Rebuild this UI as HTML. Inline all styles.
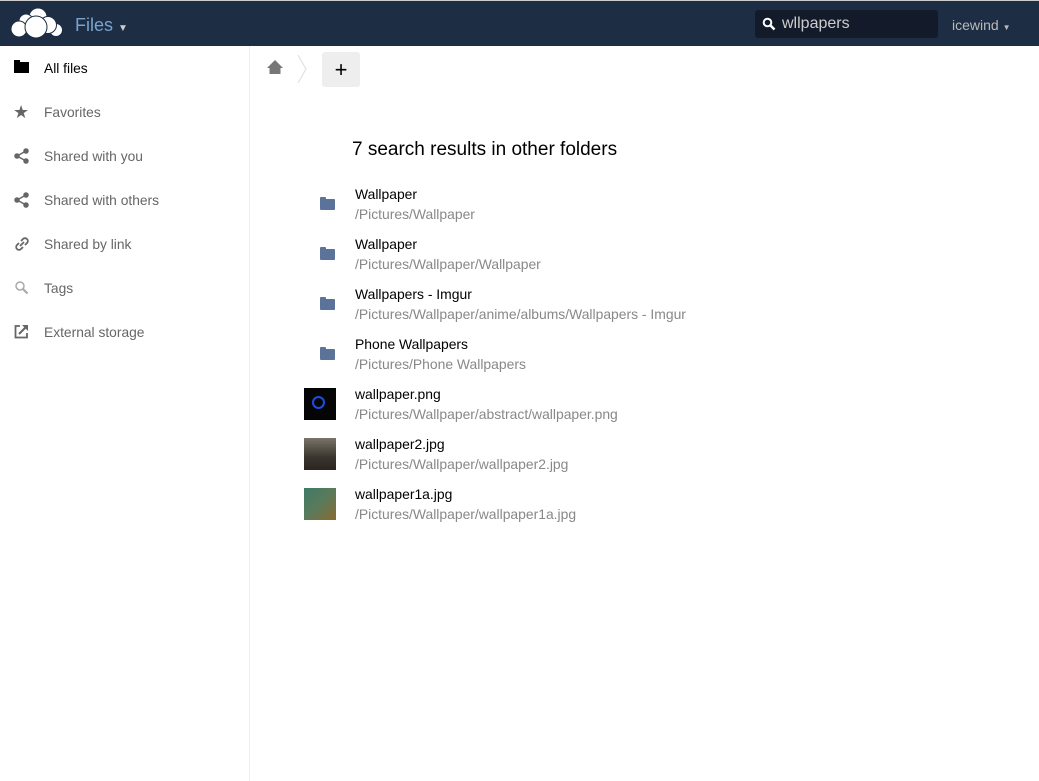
<!DOCTYPE html>
<html><head><style>
body{margin:0;width:1039px;height:781px;overflow:hidden;font-family:"Liberation Sans",sans-serif;background:#fff;position:relative}
.hdr{position:absolute;top:0;left:0;width:1039px;height:46px;background:#1d2d44;border-top:1px solid #ccc;box-sizing:border-box}
.nav{position:absolute;top:46px;left:0;width:249px;height:735px;border-right:1px solid #eee}
.ni{position:absolute;left:44px;font-size:13.8px;color:#666}
.ic{position:absolute;left:14px}
.r{position:absolute;left:355px;font-size:13.9px}
.r .n{color:#000}
.r .p{color:#888;margin-top:4px}
.fold{position:absolute;left:320px;width:15px;height:11px;background:#5b7399;border-radius:1px}
.fold:before{content:"";position:absolute;left:0;top:-2px;width:6px;height:3px;background:#5b7399;border-radius:1px 1px 0 0}
.th{position:absolute;left:304px;width:32px;height:32px}
</style></head><body>
<div class="hdr">
<svg style="position:absolute;left:10px;top:6px" width="54" height="32" viewBox="0 0 54 32"><g fill="#fff" stroke="#1d2d44" stroke-width="1"><circle cx="28" cy="10" r="9"/><circle cx="16" cy="14" r="7"/><circle cx="9" cy="22" r="8"/><circle cx="46" cy="23" r="6.5"/><circle cx="38" cy="18" r="8.5"/><circle cx="26" cy="20" r="11"/></g></svg>
<div style="position:absolute;left:75px;top:14px;font-size:18px;color:#7aa2cf">Files <span style="font-size:10px;color:#ccc">▼</span></div>
<div style="position:absolute;left:755px;top:9px;width:183px;height:28px;background:#131b2b;border-radius:3px"></div>
<svg style="position:absolute;left:762px;top:16px" width="14" height="14" viewBox="0 0 14 14"><circle cx="5.5" cy="5.5" r="3.8" fill="none" stroke="#fff" stroke-width="2"/><path d="M8 8l4.5 4.5" stroke="#fff" stroke-width="2.5"/></svg>
<div style="position:absolute;left:782px;top:14px;font-size:16px;color:#ccc">wllpapers</div>
<div style="position:absolute;left:952px;top:16px;font-size:14px;color:#bbb">icewind <span style="font-size:8px">▼</span></div>
</div>
<div class="nav">
<div class="ic" style="top:16px;width:15px;height:11px;background:#000"></div><div class="ic" style="top:14px;width:6px;height:3px;background:#000"></div>
<div class="ni" style="top:15px;color:#000">All files</div>
<div class="ic" style="top:56px;color:#666;font-size:18px;left:13px">★</div><div class="ni" style="top:59px">Favorites</div>
<svg class="ic" style="top:102px" width="15" height="16"><g fill="#666" stroke="#666" stroke-width="1.5"><circle cx="3" cy="8" r="2"/><circle cx="12" cy="3" r="2"/><circle cx="12" cy="13" r="2"/><path d="M3 8L12 3M3 8L12 13" fill="none"/></g></svg><div class="ni" style="top:103px">Shared with you</div>
<svg class="ic" style="top:146px" width="15" height="16"><g fill="#666" stroke="#666" stroke-width="1.5"><circle cx="3" cy="8" r="2"/><circle cx="12" cy="3" r="2"/><circle cx="12" cy="13" r="2"/><path d="M3 8L12 3M3 8L12 13" fill="none"/></g></svg><div class="ni" style="top:147px">Shared with others</div>
<svg class="ic" style="top:190px" width="16" height="16"><g fill="none" stroke="#666" stroke-width="1.8"><path d="M7 5l2-2a2.5 2.5 0 0 1 4 4l-2 2"/><path d="M9 11l-2 2a2.5 2.5 0 0 1-4-4l2-2"/><path d="M6 10l4-4"/></g></svg><div class="ni" style="top:191px">Shared by link</div>
<svg class="ic" style="top:234px" width="15" height="15"><circle cx="6" cy="6" r="4" fill="none" stroke="#aaa" stroke-width="1.5"/><path d="M9 9l4.5 4.5" stroke="#aaa" stroke-width="2.2"/></svg><div class="ni" style="top:235px">Tags</div>
<svg class="ic" style="top:278px" width="15" height="15"><path d="M6 2H1.5v11.5H13V9" fill="none" stroke="#666" stroke-width="1.8"/><path d="M8 1h6v6z" fill="#666"/><path d="M5 10l7-7" stroke="#666" stroke-width="2"/></svg><div class="ni" style="top:279px">External storage</div>
</div>
<svg style="position:absolute;left:267px;top:60px" width="16" height="14"><path d="M8 0L0 8h2.5v6h11V8H16z" fill="#777"/></svg>
<svg style="position:absolute;left:296px;top:55px" width="12" height="28"><path d="M2 0l8 14-8 14" fill="none" stroke="#ddd"/></svg>
<div style="position:absolute;left:322px;top:52px;width:38px;height:35px;background:#eee;border-radius:3px;text-align:center;font-size:22px;line-height:35px;color:#000">+</div>
<div style="position:absolute;left:352px;top:139px;font-size:19px;color:#000">7 search results in other folders</div>
<div class="fold" style="top:199px"></div><div class="r" style="top:186px"><div class="n">Wallpaper</div><div class="p">/Pictures/Wallpaper</div></div>
<div class="fold" style="top:249px"></div><div class="r" style="top:236px"><div class="n">Wallpaper</div><div class="p">/Pictures/Wallpaper/Wallpaper</div></div>
<div class="fold" style="top:299px"></div><div class="r" style="top:286px"><div class="n">Wallpapers - Imgur</div><div class="p">/Pictures/Wallpaper/anime/albums/Wallpapers - Imgur</div></div>
<div class="fold" style="top:349px"></div><div class="r" style="top:336px"><div class="n">Phone Wallpapers</div><div class="p">/Pictures/Phone Wallpapers</div></div>
<div class="th" style="top:388px;background:#050505"><div style="position:absolute;left:8px;top:8px;width:9px;height:9px;border:2px solid #1a4ee0;border-radius:50%"></div></div><div class="r" style="top:386px"><div class="n">wallpaper.png</div><div class="p">/Pictures/Wallpaper/abstract/wallpaper.png</div></div>
<div class="th" style="top:438px;background:linear-gradient(#7a7468,#3a352e 60%,#2a2520)"></div><div class="r" style="top:436px"><div class="n">wallpaper2.jpg</div><div class="p">/Pictures/Wallpaper/wallpaper2.jpg</div></div>
<div class="th" style="top:488px;background:linear-gradient(135deg,#3f7a6a,#5a7a5a 50%,#8a6a30)"></div><div class="r" style="top:486px"><div class="n">wallpaper1a.jpg</div><div class="p">/Pictures/Wallpaper/wallpaper1a.jpg</div></div>
</body></html>
